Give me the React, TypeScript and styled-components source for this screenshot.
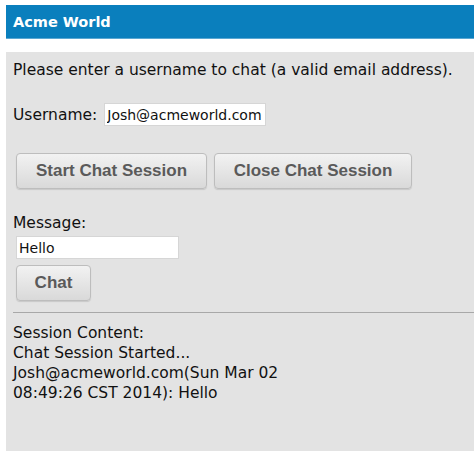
import styled, { createGlobalStyle } from "styled-components";

const GlobalStyle = createGlobalStyle`
    html, body {
        margin: 0;
        padding: 0;
        background: #ffffff;
    }
    body {
        font-family: "DejaVu Sans", Verdana, sans-serif;
    }
`;

const Page = styled.div`
    padding: 5px 0 0 6px;
    width: 474px;
    height: 451px;
    box-sizing: border-box;
    display: flex;
    flex-direction: column;
`;

const Header = styled.header`
    height: 33px;
    background: #0a7fbd;
    color: #ffffff;
    display: flex;
    align-items: center;
    padding-left: 7px;
    font-size: 14.5px;
    font-weight: bold;
    border-bottom: 1px solid #5aa7d2;
`;

const Panel = styled.main`
    margin-top: 13px;
    flex: 1;
    background: #e3e3e3;
    padding: 8px 0 0 7px;
    color: #111;
    font-size: 15.5px;
`;

const Intro = styled.p`
    margin: 0 0 23px;
    line-height: 20px;
    white-space: nowrap;
`;

const FieldRow = styled.div`
    display: flex;
    align-items: center;
    gap: 7px;
    margin-bottom: 27px;
`;

const TextBox = styled.input<{ $width: number }>`
    width: ${(p) => p.$width}px;
    height: 23px;
    box-sizing: border-box;
    border: 1px solid #d6d6d6;
    background: #fff;
    padding: 0 2px;
    font-family: "DejaVu Sans", Verdana, sans-serif;
    font-size: 14px;
    color: #111;
    outline: none;
`;

const ButtonRow = styled.div`
    display: flex;
    gap: 7px;
    padding-left: 3px;
    margin-bottom: 24px;
`;

const Button = styled.button<{ $width: number }>`
    width: ${(p) => p.$width}px;
    height: 36px;
    border: 1px solid #bdbdbd;
    border-radius: 4px;
    background: linear-gradient(#f2f2f2, #d9d9d9);
    box-shadow: 0 1px 1px rgba(0, 0, 0, 0.12);
    color: #5a5a5a;
    font-family: "Liberation Sans", Arial, sans-serif;
    font-weight: bold;
    font-size: 17px;
    cursor: pointer;
`;

const MessageBlock = styled.div`
    display: flex;
    flex-direction: column;
    align-items: flex-start;
    gap: 6px;
    padding-left: 3px;
`;

const Label = styled.label`
    line-height: 20px;
    margin-left: -3px;
    margin-bottom: -3px;
`;

const Divider = styled.hr`
    margin: 11px 0 0;
    border: none;
    border-top: 1px solid #a8a8a8;
`;

const Session = styled.div`
    margin-top: 10px;
    line-height: 20px;
    width: 300px;
`;

export default function App() {
    return (
        <>
            <GlobalStyle />
            <Page>
                <Header>Acme World</Header>
                <Panel>
                    <Intro>
                        Please enter a username to chat (a valid email
                        address).
                    </Intro>
                    <FieldRow>
                        <span>Username:</span>
                        <TextBox $width={162} defaultValue="Josh@acmeworld.com" />
                    </FieldRow>
                    <ButtonRow>
                        <Button $width={191}>Start Chat Session</Button>
                        <Button $width={198}>Close Chat Session</Button>
                    </ButtonRow>
                    <MessageBlock>
                        <Label>Message:</Label>
                        <TextBox $width={163} defaultValue="Hello" />
                        <Button $width={75}>Chat</Button>
                    </MessageBlock>
                    <Divider />
                    <Session>
                        Session Content:
                        <br />
                        Chat Session Started...
                        <br />
                        Josh@acmeworld.com(Sun Mar 02
                        <br />
                        08:49:26 CST 2014): Hello
                    </Session>
                </Panel>
            </Page>
        </>
    );
}
